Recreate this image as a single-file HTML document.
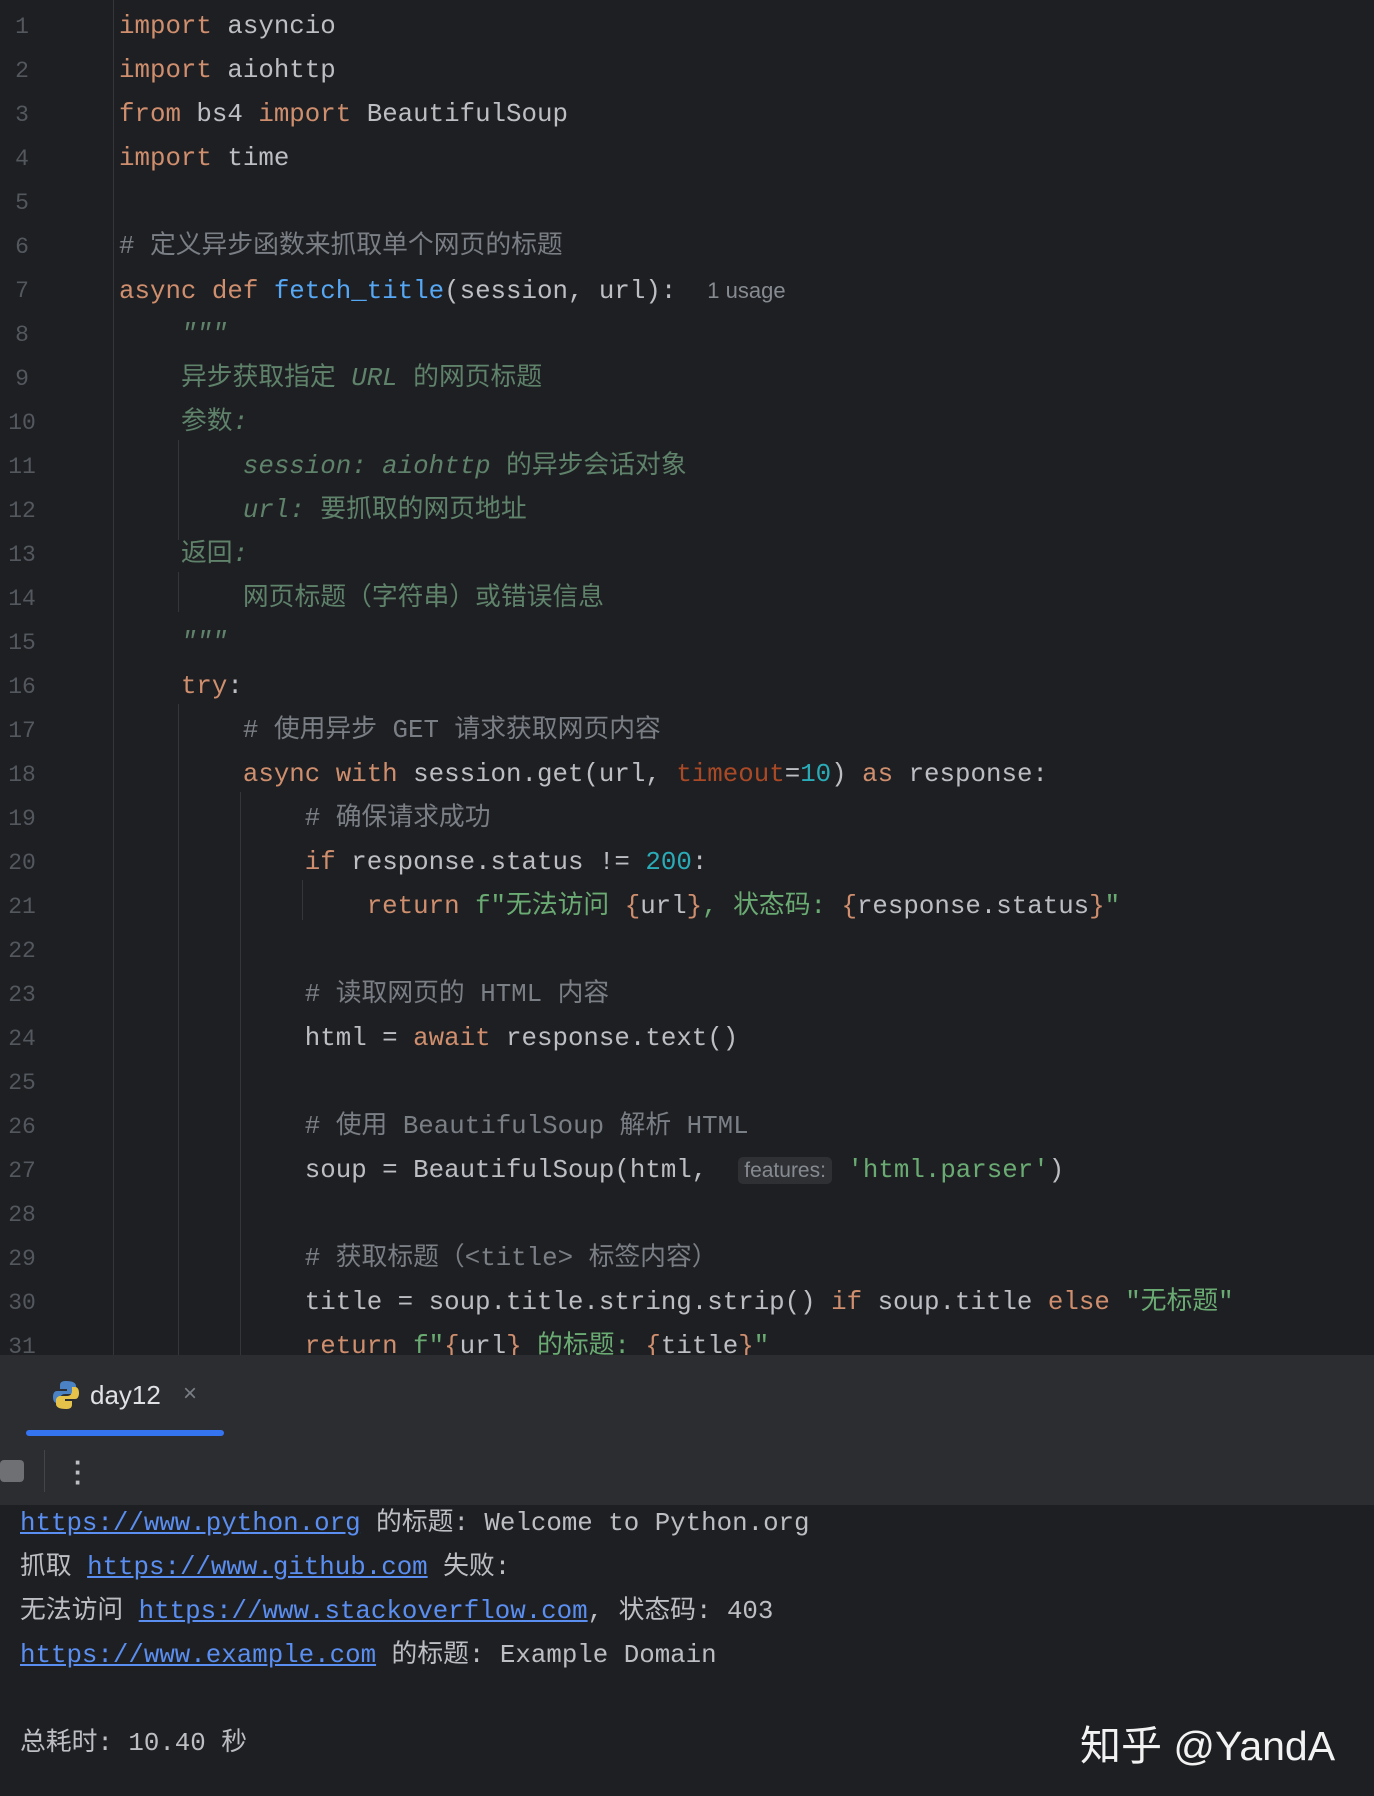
<!DOCTYPE html>
<html><head><meta charset="utf-8"><style>
body{margin:0;width:1374px;height:1796px;background:#1e1f22;overflow:hidden;position:relative;font-family:"Liberation Mono","Noto Sans CJK SC",monospace;}
.c{position:absolute;left:119px;white-space:pre;font-size:25.8px;color:#bcbec4;line-height:44px;}
.l{position:absolute;left:0;width:44px;text-align:center;color:#53575e;font-size:23px;line-height:44px;}
.k{color:#cf8e6d}.f{color:#56a8f5}.s{color:#6aab73}.cm{color:#7a7e85}.d{color:#5f826b;font-style:italic}.d i{font-style:normal}.n{color:#2aacb8}.p{color:#aa4926}
.hint{font-family:"Liberation Sans",sans-serif;color:#868a91;font-size:22px}
.box{font-family:"Liberation Sans",sans-serif;color:#868a91;font-size:21px;background:#2e3034;border-radius:5px;padding:2px 6px}
.g{position:absolute;width:1px;background:#34363a}
.out{position:absolute;left:20px;white-space:pre;font-size:25.8px;color:#bcbec4;line-height:44px}
.u{color:#5a8ef0;text-decoration:underline}
</style></head><body>
<div class="g" style="left:113px;top:0;height:1355px"></div>
<div class="g" style="left:178px;top:440px;height:100px"></div>
<div class="g" style="left:178px;top:572px;height:40px"></div>
<div class="g" style="left:178px;top:704px;height:651px"></div>
<div class="g" style="left:240px;top:792px;height:563px"></div>
<div class="g" style="left:302px;top:880px;height:40px"></div>
<div id="code"></div>
<script>
const L=[
'<span class="k">import</span> asyncio',
'<span class="k">import</span> aiohttp',
'<span class="k">from</span> bs4 <span class="k">import</span> BeautifulSoup',
'<span class="k">import</span> time',
'',
'<span class="cm"># 定义异步函数来抓取单个网页的标题</span>',
'<span class="k">async def</span> <span class="f">fetch_title</span>(session, url):  <span class="hint">1 usage</span>',
'    <span class="d">"""</span>',
'    <span class="d"><i>异步获取指定</i> URL <i>的网页标题</i></span>',
'    <span class="d"><i>参数</i>:</span>',
'        <span class="d">session: aiohttp <i>的异步会话对象</i></span>',
'        <span class="d">url: <i>要抓取的网页地址</i></span>',
'    <span class="d"><i>返回</i>:</span>',
'        <span class="d"><i>网页标题（字符串）或错误信息</i></span>',
'    <span class="d">"""</span>',
'    <span class="k">try</span>:',
'        <span class="cm"># 使用异步 GET 请求获取网页内容</span>',
'        <span class="k">async with</span> session.get(url, <span class="p">timeout</span>=<span class="n">10</span>) <span class="k">as</span> response:',
'            <span class="cm"># 确保请求成功</span>',
'            <span class="k">if</span> response.status != <span class="n">200</span>:',
'                <span class="k">return</span> <span class="s">f"无法访问 </span><span class="k">{</span>url<span class="k">}</span><span class="s">, 状态码: </span><span class="k">{</span>response.status<span class="k">}</span><span class="s">"</span>',
'',
'            <span class="cm"># 读取网页的 HTML 内容</span>',
'            html = <span class="k">await</span> response.text()',
'',
'            <span class="cm"># 使用 BeautifulSoup 解析 HTML</span>',
'            soup = BeautifulSoup(html,  <span class="box">features:</span> <span class="s">\'html.parser\'</span>)',
'',
'            <span class="cm"># 获取标题（&lt;title&gt; 标签内容）</span>',
'            title = soup.title.string.strip() <span class="k">if</span> soup.title <span class="k">else</span> <span class="s">"无标题"</span>',
'            <span class="k">return</span> <span class="s">f"</span><span class="k">{</span>url<span class="k">}</span><span class="s"> 的标题: </span><span class="k">{</span>title<span class="k">}</span><span class="s">"</span>'];
let h='';L.forEach((t,i)=>{const y=5+i*44;h+=`<div class="l" style="top:${y}px">${i+1}</div><div class="c" style="top:${y}px">${t}</div>`});
document.getElementById('code').innerHTML=h;
</script>
<div style="position:absolute;left:0;top:1355px;width:1374px;height:82px;background:#2b2d30;border-bottom:1px solid #1e1f22"></div>
<svg style="position:absolute;left:52px;top:1380px" width="28" height="30" viewBox="0 0 28 30"><path d="M14 1c-6 0-6 3-6 5v3h7v2H5c-3 0-4 3-4 6s1 6 4 6h3v-4c0-3 2-5 5-5h7c2 0 4-2 4-4V6c0-3-3-5-10-5z" fill="#4a82c3"/><path d="M14 29c6 0 6-3 6-5v-3h-7v-2h10c3 0 4-3 4-6s-1-6-4-6h-3v4c0 3-2 5-5 5H8c-2 0-4 2-4 4v4c0 3 3 5 10 5z" fill="#e5c24a"/></svg>
<div style="position:absolute;left:90px;top:1380px;font-family:'Liberation Sans',sans-serif;font-size:26px;color:#dfe1e5">day12</div>
<div style="position:absolute;left:183px;top:1380px;font-family:'Liberation Sans',sans-serif;font-size:24px;color:#7a7e85">×</div>
<div style="position:absolute;left:26px;top:1430px;width:198px;height:6px;background:#3574f0;border-radius:3px"></div>
<div style="position:absolute;left:0;top:1437px;width:1374px;height:68px;background:#2b2d30"></div>
<div style="position:absolute;left:0;top:1460px;width:24px;height:22px;background:#6f7074;border-radius:4px"></div>
<div style="position:absolute;left:44px;top:1450px;width:1px;height:42px;background:#43454a"></div>
<div style="position:absolute;left:74px;top:1457px;color:#bcbec4;font-size:26px;font-family:'Liberation Sans';font-weight:bold;line-height:10px">·<br>·<br>·</div>
<div class="out" style="top:1502px"><span class="u">https://www.python.org</span> 的标题: Welcome to Python.org</div>
<div class="out" style="top:1546px">抓取 <span class="u">https://www.github.com</span> 失败:</div>
<div class="out" style="top:1590px">无法访问 <span class="u">https://www.stackoverflow.com</span>, 状态码: 403</div>
<div class="out" style="top:1634px"><span class="u">https://www.example.com</span> 的标题: Example Domain</div>
<div class="out" style="top:1722px">总耗时: 10.40 秒</div>
<div style="position:absolute;left:1080px;top:1712px;font-family:'Liberation Sans','Noto Sans CJK SC',sans-serif;font-size:41px;color:#f2f2f2">知乎 @YandA</div>
</body></html>
